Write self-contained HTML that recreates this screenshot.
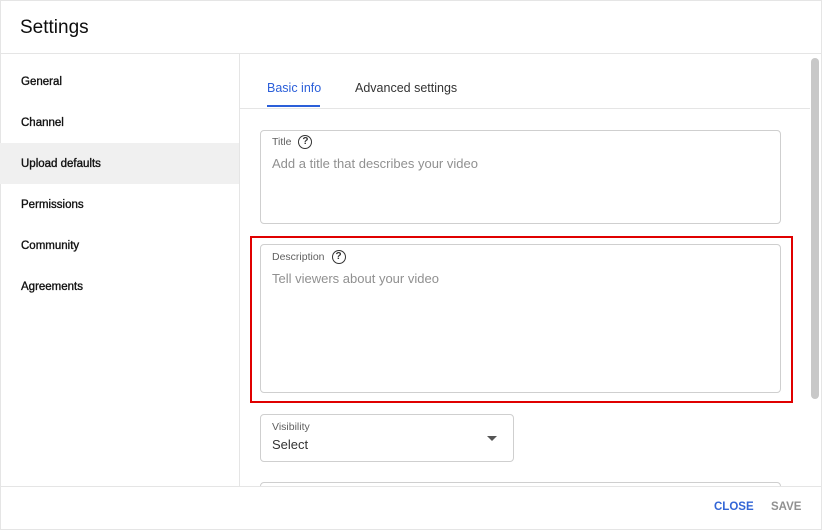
<!DOCTYPE html>
<html><head><meta charset="utf-8"><style>
*{box-sizing:border-box;margin:0;padding:0}
body{width:822px;height:530px;overflow:hidden;background:#fff;font-family:"Liberation Sans",sans-serif;position:relative}
.abs{position:absolute}
.frame{left:0;top:0;width:822px;height:530px;border:1px solid #e5e5e5}
.hdr{left:20px;top:17px;font-size:19px;color:#0d0d0d}
.hline{left:0;top:53px;width:822px;height:1px;background:#e5e5e5}
.vline{left:239px;top:54px;width:1px;height:432px;background:#e5e5e5}
.nav{left:0;width:239px;height:41px;font-size:11.5px;color:#111;-webkit-text-stroke:0.35px #111;padding-left:21px;line-height:42px}
.sel{background:#f0f0f0}
.tab{top:81px;font-size:12.5px}
.box{border:1px solid #cfcfcf;border-radius:4px}
.lbl{font-size:10.5px;color:#606060;display:flex;align-items:center}
.q{display:inline-block;width:14px;height:14px;border:1.5px solid #333;border-radius:50%;font-size:10px;font-weight:bold;text-align:center;line-height:11px;color:#333;margin-left:7px}
.ph{font-size:13px;color:#909090}
.foot{left:0;top:486px;width:822px;height:1px;background:#e5e5e5}
.btn{top:501px;font-size:11.5px;font-weight:bold}
</style></head><body>
<div class="abs frame"></div>
<div class="abs hdr">Settings</div>
<div class="abs hline"></div>
<div class="abs vline"></div>
<div class="abs nav" style="top:61px">General</div>
<div class="abs nav" style="top:102px">Channel</div>
<div class="abs nav sel" style="top:143px">Upload defaults</div>
<div class="abs nav" style="top:184px">Permissions</div>
<div class="abs nav" style="top:225px">Community</div>
<div class="abs nav" style="top:266px">Agreements</div>

<div class="abs tab" style="left:267px;color:#2b5fd9">Basic info</div>
<div class="abs" style="left:267px;top:105px;width:53px;height:2px;background:#2b5fd9"></div>
<div class="abs tab" style="left:355px;color:#333">Advanced settings</div>
<div class="abs" style="left:240px;top:108px;width:570px;height:1px;background:#e5e5e5"></div>

<div class="abs box" style="left:260px;top:130px;width:521px;height:94px"></div>
<div class="abs lbl" style="left:272px;top:135px">Title<span class="q">?</span></div>
<div class="abs ph" style="left:272px;top:156px">Add a title that describes your video</div>

<div class="abs" style="left:250px;top:236px;width:543px;height:167px;border:2px solid #e00000"></div>
<div class="abs box" style="left:260px;top:244px;width:521px;height:149px"></div>
<div class="abs lbl" style="left:272px;top:250px">Description<span class="q">?</span></div>
<div class="abs ph" style="left:272px;top:271px">Tell viewers about your video</div>

<div class="abs box" style="left:260px;top:414px;width:254px;height:48px"></div>
<div class="abs" style="left:272px;top:421px;font-size:10.5px;color:#606060">Visibility</div>
<div class="abs" style="left:272px;top:437px;font-size:13px;color:#333">Select</div>
<div class="abs" style="left:487px;top:436px;width:0;height:0;border-left:5px solid transparent;border-right:5px solid transparent;border-top:5px solid #555"></div>

<div class="abs box" style="left:260px;top:482px;width:521px;height:20px"></div>
<div class="abs" style="left:240px;top:487px;width:581px;height:42px;background:#fff"></div>
<div class="abs foot"></div>

<div class="abs" style="left:811px;top:58px;width:8px;height:341px;background:#c8c8c8;border-radius:4px"></div>

<div class="abs btn" style="left:714px;color:#3366d6">CLOSE</div>
<div class="abs btn" style="left:771px;color:#909090">SAVE</div>
</body></html>
